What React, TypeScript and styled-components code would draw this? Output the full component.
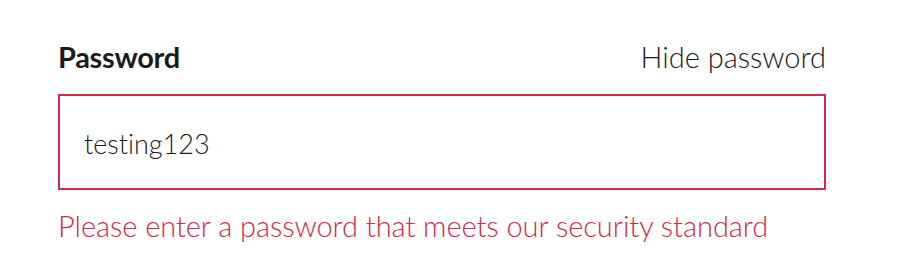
import React from "react";
import styled, { createGlobalStyle } from "styled-components";

const Global = createGlobalStyle`
  html, body { margin: 0; padding: 0; background: #fff; }
  body { font-family: Lato, "Open Sans", sans-serif; color: #1b1b1b; font-variant-ligatures: none; }
`;

const Field = styled.div`
  width: 768px;
  padding: 39px 0 0 58px;
  display: flex;
  flex-direction: column;
`;

const LabelRow = styled.div`
  display: flex;
  justify-content: space-between;
  align-items: baseline;
  height: 55px;
`;

const Label = styled.label`
  font-size: 29px;
  font-weight: 700;
  letter-spacing: -0.3px;
`;

const Toggle = styled.button`
  font-family: inherit;
  font-size: 29px;
  font-weight: 300;
  color: #1b1b1b;
  background: none;
  border: none;
  padding: 0;
  cursor: pointer;
  font-variant-ligatures: none;
`;

const Input = styled.input<{ $error?: boolean }>`
  box-sizing: border-box;
  width: 768px;
  height: 96px;
  border: 2px solid ${(p) => (p.$error ? "#d0294a" : "#888")};
  padding: 2px 24px 0;
  font-family: inherit;
  font-size: 27px;
  font-weight: 300;
  color: #1b1b1b;
  outline: none;
  font-variant-ligatures: none;
`;

const ErrorText = styled.p`
  margin: 18px 0 0;
  font-size: 29px;
  font-weight: 300;
  color: #d0294a;
  letter-spacing: -0.05px;
`;

export default function App() {
  return (
    <>
      <Global />
      <Field>
        <LabelRow>
          <Label htmlFor="pw">Password</Label>
          <Toggle type="button">Hide password</Toggle>
        </LabelRow>
        <Input id="pw" type="text" defaultValue="testing123" $error />
        <ErrorText>Please enter a password that meets our security standard</ErrorText>
      </Field>
    </>
  );
}
